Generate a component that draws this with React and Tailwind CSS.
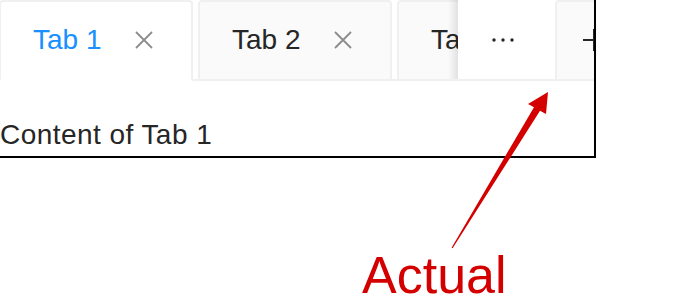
import React from "react";

const tabs = [
  { key: "1", label: "Tab 1" },
  { key: "2", label: "Tab 2" },
  { key: "3", label: "Tab 3" },
];

function CloseIcon() {
  return (
    <svg width="18" height="18" viewBox="0 0 18 18" className="shrink-0">
      <path d="M1 1 L17 17 M17 1 L1 17" stroke="#8c8c8c" strokeWidth="1.8" fill="none" />
    </svg>
  );
}

function Tab({ label, active, first }) {
  return (
    <div
      className={
        "flex h-[81px] w-[194px] shrink-0 items-center rounded-t-[4px] border-2 pb-[2px] pl-[32px] " +
        (first ? "-ml-[1px] " : "") +
        (active
          ? "border-[#f0f0f0] border-b-white bg-white text-[#1890ff]"
          : "border-[#f0f0f0] bg-[#fafafa] text-[#262626]")
      }
    >
      <span className="whitespace-nowrap">{label}</span>
      <span className="ml-[33px] flex">
        <CloseIcon />
      </span>
    </div>
  );
}

export default function App() {
  return (
    <div
      className="relative h-[308px] w-[678px] overflow-hidden bg-white text-[28px]"
      style={{ fontFamily: '"Liberation Sans", Arial, sans-serif' }}
    >
      {/* card tabs box, top/left edges cropped off */}
      <div className="h-[158px] w-[596px] overflow-hidden border-r-2 border-b-2 border-black">
        <div className="flex h-[81px] border-b-2 border-[#f0f0f0]">
          <div className="relative -mb-[2px] flex h-[81px] w-[458px] shrink-0 gap-[5px] overflow-hidden">
            {tabs.map((t, i) => (
              <Tab key={t.key} label={t.label} active={i === 0} first={i === 0} />
            ))}
            <div className="absolute top-0 right-0 h-[79px] w-[10px] bg-gradient-to-r from-transparent to-black/10" />
          </div>
          <div className="-mb-[2px] flex h-[81px] w-[96px] shrink-0 items-center justify-center border-b-2 border-[#f0f0f0] bg-white pr-[6px]">
            <svg width="24" height="6" viewBox="0 0 24 6">
              <circle cx="3" cy="3" r="1.7" fill="#262626" />
              <circle cx="12" cy="3" r="1.7" fill="#262626" />
              <circle cx="21" cy="3" r="1.7" fill="#262626" />
            </svg>
          </div>
          <div className="-mb-[2px] ml-[1px] flex h-[81px] w-[80px] shrink-0 items-center rounded-t-[4px] border-2 border-[#f0f0f0] bg-[#fafafa] pb-[2px] pl-[26px]">
            <svg width="22" height="22" viewBox="0 0 22 22">
              <path d="M0 11 H22 M11 0 V22" stroke="#262626" strokeWidth="2" fill="none" />
            </svg>
          </div>
        </div>
        <p className="mt-[32px] leading-[44px] tracking-[0.45px] whitespace-nowrap text-[#262626]">Content of Tab 1</p>
      </div>

      <div className="mt-[91px] pl-[362px] text-[52px] leading-none text-[#d40000]">Actual</div>

      <svg className="pointer-events-none absolute top-0 left-0" width="678" height="308" viewBox="0 0 678 308">
        <polygon
          points="451.6,247.7 534,107.2 528,104 548,92 546,114 540,110.8 452.6,248.3"
          fill="#d40000"
        />
      </svg>
    </div>
  );
}
